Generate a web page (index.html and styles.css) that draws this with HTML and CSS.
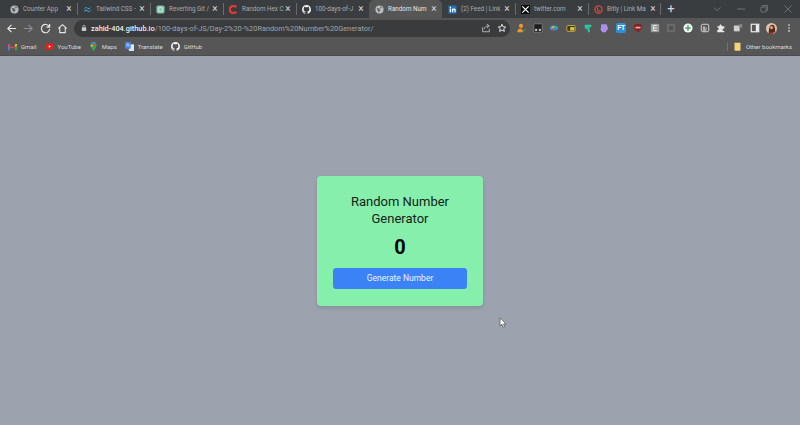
FILE: index.html
```html
<!DOCTYPE html>
<html lang="en">
<head>
<meta charset="utf-8">
<title>Random Number Generator</title>
<link rel="stylesheet" href="styles.css">
</head>
<body>
<header class="chrome">
  <div class="tabstrip">
    <div class="tab"><svg class="fav" viewBox="0 0 10 10"><circle cx="5" cy="5" r="4.5" fill="#b4b7bb"/><path d="M2 3l3 1 1 2-2 2-1-2zM6 1l2 2-2 1z" fill="#55585c"/></svg><span class="tab-title">Counter App</span><span class="x">×</span></div>
    <div class="tab sep"><svg class="fav" viewBox="0 0 10 10"><path d="M1 5c1-3 3-3 4-2s2 1 4-1c-1 3-3 3-4 2s-2-1-4 1zM1 8c1-3 3-3 4-2s2 1 4-1c-1 3-3 3-4 2s-2-1-4 1z" fill="#38bdf8"/></svg><span class="tab-title">Tailwind CSS -</span><span class="x">×</span></div>
    <div class="tab sep"><svg class="fav" viewBox="0 0 10 10"><rect x=".5" y=".5" width="9" height="9" rx="2" fill="#7fc8a9"/><circle cx="5" cy="5" r="2.4" fill="none" stroke="#dff3ea"/></svg><span class="tab-title">Reverting Git /</span><span class="x">×</span></div>
    <div class="tab sep"><svg class="fav" viewBox="0 0 10 10"><path d="M8 2.500A4 4 0 1 0 8 7.500" fill="none" stroke="#e53935" stroke-width="2.400"/></svg><span class="tab-title">Random Hex C</span><span class="x">×</span></div>
    <div class="tab sep"><svg class="fav" viewBox="0 0 16 16"><path fill="#f2f2f2" d="M8 0C3.580 0 0 3.580 0 8c0 3.540 2.290 6.530 5.470 7.590.4.070.55-.17.55-.38v-1.340c-2.230.49-2.690-1.070-2.690-1.070-.36-.92-.89-1.170-.89-1.170-.73-.5.050-.49.050-.49.800.06 1.230.83 1.230.83.710 1.220 1.870.87 2.330.66.070-.52.280-.87.510-1.070-1.780-.2-3.640-.89-3.640-3.950 0-.87.310-1.590.82-2.150-.08-.2-.36-1.020.08-2.120 0 0 .67-.21 2.200.82A7.600 7.600 0 0 1 8 3.900c.68 0 1.360.09 2 .27 1.530-1.040 2.200-.82 2.200-.82.44 1.100.16 1.920.08 2.120.51.560.82 1.270.82 2.150 0 3.070-1.870 3.750-3.650 3.950.29.250.54.730.54 1.480v2.200c0 .21.150.46.55.38A8 8 0 0 0 16 8c0-4.420-3.580-8-8-8z"/></svg><span class="tab-title">100-days-of-J</span><span class="x">×</span></div>
    <div class="tab active"><svg class="fav" viewBox="0 0 10 10"><circle cx="5" cy="5" r="4.5" fill="#b9bcc0"/><path d="M2 3l3 1 1 2-2 2-1-2zM6 1l2 2-2 1z" fill="#63666a"/></svg><span class="tab-title">Random Num</span><span class="x">×</span></div>
    <div class="tab"><svg class="fav" viewBox="0 0 10 10"><rect x=".5" y=".5" width="9" height="9" rx="1" fill="#1d75c9"/><rect x="2" y="4" width="1.400" height="4" fill="#fff"/><rect x="2" y="2" width="1.400" height="1.300" fill="#fff"/><path d="M4.500 4h1.300v.7c.8-1.200 2.700-.8 2.700 1V8H7.200V6c0-1-1.400-1-1.400 0v2H4.500z" fill="#fff"/></svg><span class="tab-title">(2) Feed | Link</span><span class="x">×</span></div>
    <div class="tab sep"><svg class="fav" viewBox="0 0 10 10"><rect width="10" height="10" fill="#0c0c0c"/><path d="M1.500 1.500l7 7M8.500 1.500l-7 7" stroke="#fff" stroke-width="1.300"/></svg><span class="tab-title">twitter.com</span><span class="x">×</span></div>
    <div class="tab sep last"><svg class="fav" viewBox="0 0 10 10"><circle cx="5" cy="5" r="4" fill="none" stroke="#e5443c" stroke-width="1.400"/><path d="M3.500 2.500l1 4.500 2.500-1" fill="none" stroke="#e5443c" stroke-width="1.200"/></svg><span class="tab-title">Bitly | Link Ma</span><span class="x">×</span></div>
    <div class="newtab">+</div>
    <div class="winctl">
      <svg class="ctl" viewBox="0 0 10 10"><path d="M1.500 3.500L5 6.500l3.500-3" fill="none" stroke="#6d7074"/></svg>
      <svg class="ctl" viewBox="0 0 10 10"><path d="M1 5h8" stroke="#6d7074"/></svg>
      <svg class="ctl" viewBox="0 0 10 10"><path d="M2 3h5v5H2zM3.500 3V1.500h5v5H7" fill="none" stroke="#6d7074"/></svg>
      <svg class="ctl" viewBox="0 0 10 10"><path d="M1.500 1.500l7 7M8.500 1.500l-7 7" stroke="#6d7074"/></svg>
    </div>
  </div>
  <div class="toolbar">
    <svg class="nav" viewBox="0 0 12 12"><path d="M11 6H2M6 2L2 6l4 4" fill="none" stroke="#e4e5e6" stroke-width="1.300"/></svg>
    <svg class="nav" viewBox="0 0 12 12"><path d="M1 6h9M6 2l4 4-4 4" fill="none" stroke="#8b8d90" stroke-width="1.300"/></svg>
    <svg class="nav" viewBox="0 0 12 12"><path d="M10 4a4.500 4.500 0 1 0 .5 2.500M10.500 1v3.500H7" fill="none" stroke="#e4e5e6" stroke-width="1.300"/></svg>
    <svg class="nav" viewBox="0 0 12 12"><path d="M1.500 6L6 1.800 10.500 6M3 5v5.500h6V5" fill="none" stroke="#e4e5e6" stroke-width="1.200"/></svg>
    <div class="omnibox">
      <svg class="lock" viewBox="0 0 8 10"><rect x="1" y="4" width="6" height="5" rx="1" fill="#c9cacb"/><path d="M2.500 4V2.800a1.500 1.500 0 0 1 3 0V4" fill="none" stroke="#c9cacb"/></svg>
      <span class="url"><b class="host">zahid-404.github.io</b>/100-days-of-JS/Day-2%20-%20Random%20Number%20Generator/</span>
      <svg class="omni-ic" viewBox="0 0 12 12"><path d="M2 5v5.500h8V7M4 7c.5-2.500 2.500-3.500 4.500-3.500M7 1.500l3 2-3 2.500" fill="none" stroke="#c9cacb"/></svg>
      <svg class="omni-ic" viewBox="0 0 12 12"><path d="M6 1.500l1.300 3 3.200.3-2.400 2.100.7 3.200L6 8.400l-2.800 1.700.7-3.200-2.400-2.100 3.200-.3z" fill="none" stroke="#e4e5e6" stroke-width="1.200"/></svg>
    </div>
    <div class="exts">
      <svg class="ext" viewBox="0 0 12 12"><circle cx="6" cy="3.500" r="2.500" fill="#f0932b"/><path d="M1.500 11c0-6 7-6 7 0z" fill="#f0932b"/><path d="M7 9l1.500 1.500L11 7.500" stroke="#4caf50" fill="none"/></svg>
      <svg class="ext" viewBox="0 0 12 12"><rect x="1" y="1" width="10" height="10" rx="1" fill="#1c1c1c" stroke="#aaa" stroke-width=".6"/><rect x="2.500" y="7" width="2.500" height="2.500" fill="#ccc"/><rect x="7" y="7" width="2.500" height="2.500" fill="#ccc"/></svg>
      <svg class="ext" viewBox="0 0 12 12"><ellipse cx="6" cy="6" rx="5" ry="3" fill="#3a8dde"/><path d="M2 6h4V3z" fill="#f0c02b"/><path d="M6 6h5L8 3z" fill="#4caf50"/><path d="M2 7h5l-2 2z" fill="#e5533c"/></svg>
      <svg class="ext" viewBox="0 0 12 12"><rect x="1" y="3" width="10" height="7" rx="1" fill="#3d3d2a" stroke="#e0b83a"/><rect x="5" y="5" width="5" height="4" fill="#e8c13d"/></svg>
      <svg class="ext" viewBox="0 0 12 12"><path d="M2 2h8v3H7.500l1 6H6L5 6 3.500 8 2 5z" fill="#25c7a6"/></svg>
      <svg class="ext" viewBox="0 0 12 12"><path d="M3 1.500h6l2 5-3 4.500H4L2 8z" fill="#b58be8"/><path d="M3 1.500L2 8l4-2z" fill="#7fa5ee"/></svg>
      <span class="ext ext-ft">FT</span>
      <svg class="ext" viewBox="0 0 12 12"><path d="M1.500 2L6 1l4.500 1v5L6 11 1.500 7z" fill="#8e1c1c"/><rect x="3" y="4.500" width="6" height="2" fill="#e9b0b0"/></svg>
      <svg class="ext" viewBox="0 0 12 12"><rect x="1" y="1" width="10" height="10" fill="#9c9c9c"/><path d="M4 3h4M4 6h4M4 9h4M4 3v6" stroke="#e8e8e8" stroke-width="1.200"/></svg>
      <svg class="ext" viewBox="0 0 12 12"><rect x="1" y="1" width="10" height="10" fill="#6a6a6a"/><rect x="3.500" y="3.500" width="5" height="5" fill="#525252"/></svg>
      <svg class="ext" viewBox="0 0 12 12"><circle cx="6" cy="6" r="5.500" fill="#f2f2f2"/><path d="M6 2.800v6.400M2.800 6h6.400" stroke="#2aa05a" stroke-width="1.500"/></svg>
      <svg class="ext" viewBox="0 0 12 12"><rect x="1.500" y="1.500" width="9" height="9" rx="2" fill="none" stroke="#cfcfcf" stroke-width="1.200"/><path d="M4 10V4.500h1.500V10M7 10V6h1.500" stroke="#cfcfcf" fill="none"/></svg>
      <svg class="ext" viewBox="0 0 12 12"><path d="M1.500 4H4c0-3 3-3 3 0h3v2.500c-3 0-3 3 0 3V11H1.500V8.500c2.500 0 2.500-3 0-3z" fill="#e6e6e6"/></svg>
      <svg class="ext" viewBox="0 0 12 12"><rect x="1" y="3" width="7" height="7" fill="#d0d0d0"/><rect x="7" y="1.500" width="4" height="4" fill="#8a8a8a"/></svg>
      <svg class="ext" viewBox="0 0 12 12"><rect x="1.500" y="1.500" width="9" height="9" fill="none" stroke="#efefef" stroke-width="1.400"/><rect x="7" y="2" width="3" height="8" fill="#efefef"/></svg>
      <svg class="ext avatar" viewBox="0 0 12 12"><circle cx="6" cy="6" r="6" fill="#d8c4b0"/><path d="M3 12c0-7 1-10 4-10s3 5 3 8z" fill="#5a2a18"/><circle cx="6" cy="5" r="1.800" fill="#d99a78"/><path d="M4 12c.5-3 3.500-3 4 0z" fill="#a5392c"/></svg>
      <svg class="ext" viewBox="0 0 12 12"><circle cx="6" cy="2.500" r="1" fill="#e4e5e6"/><circle cx="6" cy="6" r="1" fill="#e4e5e6"/><circle cx="6" cy="9.500" r="1" fill="#e4e5e6"/></svg>
    </div>
  </div>
  <div class="bookmarks">
    <span class="bm"><svg class="bm-ic" viewBox="0 0 12 10"><path d="M0 1.500h2.500V10H1a1 1 0 0 1-1-1z" fill="#4285f4"/><path d="M9.500 1.500H12V9a1 1 0 0 1-1 1H9.500z" fill="#34a853"/><path d="M0 1.500L6 6l6-4.500V4L6 8 0 4z" fill="#ea4335"/><path d="M9.500 1.500H12V4L9.500 5.500z" fill="#fbbc05"/></svg>Gmail</span>
    <span class="bm"><svg class="bm-ic" viewBox="0 0 12 10"><rect y="1" width="12" height="8" rx="2.500" fill="#e62117"/><path d="M5 3.200v3.600L8 5z" fill="#fff"/></svg>YouTube</span>
    <span class="bm"><svg class="bm-ic" viewBox="0 0 10 12"><path d="M5 0a4 4 0 0 1 4 4c0 3-4 8-4 8S1 7 1 4a4 4 0 0 1 4-4z" fill="#34a853"/><path d="M5 0a4 4 0 0 1 3 1.400L5 4 2 1.400A4 4 0 0 1 5 0z" fill="#4285f4"/><path d="M1 4l4 0-3 3z" fill="#fbbc05"/><circle cx="6.500" cy="3.500" r="1.500" fill="#ea4335"/></svg>Maps</span>
    <span class="bm"><svg class="bm-ic" viewBox="0 0 12 12"><rect x="5" y="3" width="7" height="9" rx="1" fill="#dfe6f2"/><rect y="0" width="7.500" height="9" rx="1" fill="#4285f4"/><path d="M2 6l1.700-4L5.500 6" stroke="#fff" fill="none" stroke-width=".8"/></svg>Translate</span>
    <span class="bm"><svg class="bm-ic" viewBox="0 0 16 16"><path fill="#f2f2f2" d="M8 0C3.580 0 0 3.580 0 8c0 3.540 2.290 6.530 5.470 7.590.4.070.55-.17.55-.38v-1.340c-2.230.49-2.690-1.070-2.690-1.070-.36-.92-.89-1.170-.89-1.170-.73-.5.050-.49.050-.49.800.06 1.230.83 1.230.83.710 1.220 1.870.87 2.330.66.070-.52.280-.87.510-1.070-1.780-.2-3.640-.89-3.640-3.950 0-.87.310-1.590.82-2.150-.08-.2-.36-1.020.08-2.120 0 0 .67-.21 2.200.82A7.600 7.600 0 0 1 8 3.900c.68 0 1.360.09 2 .27 1.530-1.040 2.200-.82 2.200-.82.44 1.100.16 1.920.08 2.120.51.560.82 1.270.82 2.150 0 3.070-1.870 3.750-3.650 3.950.29.250.54.730.54 1.480v2.200c0 .21.150.46.55.38A8 8 0 0 0 16 8c0-4.420-3.580-8-8-8z"/></svg>GitHub</span>
    <span class="bm other"><svg class="bm-ic" viewBox="0 0 10 12"><path d="M1 1h8v9.500a1 1 0 0 1-1 1H2a1 1 0 0 1-1-1z" fill="#f4d678"/></svg>Other bookmarks</span>
  </div>
</header>
<main class="stage">
  <section class="card">
    <h1 class="heading">Random Number Generator</h1>
    <div class="value">0</div>
    <button class="generate" type="button">Generate Number</button>
  </section>
  <svg class="cursor" viewBox="0 0 9 13"><path d="M1 1v9.500l2.300-2 1.500 3.500 1.600-.7L5 8.300h3z" fill="#fff" stroke="#222" stroke-width=".6"/></svg>
</main>
</body>
</html>
```
FILE: styles.css
```css
* { box-sizing: border-box; }
html, body { margin: 0; height: 100%; }
body {
  display: flex;
  flex-direction: column;
  height: 425px;
  overflow: hidden;
  font-family: Roboto, "Noto Sans", sans-serif;
  background: #9ca3af;
}
.chrome { flex: none; height: 56px; background: #565656; display: flex; flex-direction: column; border-bottom: 1px solid #4a4b4d; }
.tabstrip { height: 18px; background: #3a3d40; display: flex; align-items: stretch; padding-left: 4px; }
.tab {
  width: 73px; display: flex; align-items: center; padding: 0 4px 0 6px; position: relative;
  font-size: 6.300px; color: #a9abad; white-space: nowrap;
}
.tab.sep::before { content: ""; position: absolute; left: 0; top: 3px; bottom: 3px; width: 1px; background: #6a6c6f; }
.tab.last::after { content: ""; position: absolute; right: 0; top: 3px; bottom: 3px; width: 1px; background: #6a6c6f; }
.tab.active { background: #565656; color: #e4e5e6; border-radius: 5px 5px 0 0; }
.fav { width: 9px; height: 9px; flex: none; margin-right: 4px; }
.tab-title { flex: 1; min-width: 0; }
.x { flex: none; font-size: 10px; line-height: 10px; color: #d6d7d8; width: 8px; text-align: center; }
.newtab { width: 20px; color: #d6d7d8; font-size: 13px; line-height: 17px; text-align: center; }
.winctl { margin-left: auto; display: flex; align-items: center; gap: 13.700px; padding-right: 7px; }
.ctl { width: 10px; height: 10px; }
.toolbar { height: 20px; display: flex; align-items: center; padding-left: 6px; }
.nav { width: 11px; height: 11px; flex: none; margin-right: 6px; }
.omnibox {
  width: 436px; height: 17px; border-radius: 9px; background: #3a3b3d;
  display: flex; align-items: center; padding: 0 3px 0 7px;
}
.lock { width: 6px; height: 8px; flex: none; margin-right: 4px; }
.url { flex: 1; font-size: 7.350px; color: #a3a5a8; white-space: nowrap; overflow: hidden; }
.host { font-weight: 500; color: #eeeeee; }
.omni-ic { width: 10px; height: 10px; flex: none; margin-left: 6px; }
.exts { flex: 1; display: flex; align-items: center; gap: 6.700px; padding-left: 6px; }
.ext { width: 10px; height: 10px; flex: none; }
.ext-ft { background: #2d8fe0; color: #fff; font-size: 6.500px; font-weight: 700; line-height: 10px; text-align: center; border-radius: 2px; font-family: "Liberation Sans", sans-serif; }
.avatar { width: 11px; height: 11px; }
.bookmarks { height: 17px; display: flex; align-items: center; padding: 0 8px; gap: 8px; font-size: 6px; color: #dadbdc; }
.bm { display: flex; align-items: center; gap: 4px; white-space: nowrap; }
.bm-ic { width: 9px; height: 9px; flex: none; }
.other { margin-left: auto; padding-left: 5px; border-left: 1px solid #6f7072; }
.stage { flex: 1; position: relative; display: flex; align-items: center; justify-content: center; padding-bottom: 1px; }
.card {
  width: 166px; height: 130px; margin-top: 1px; background: #86efac; border-radius: 4px;
  padding: 17px 16px 16px; display: flex; flex-direction: column; align-items: stretch;
  box-shadow: 0 2px 4px rgba(0,0,0,.12);
}
.heading { margin: 0; font-size: 13px; font-weight: 400; line-height: 17px; text-align: center; color: #14231a; }
.value { margin-top: 7px; font-size: 20px; line-height: 26px; font-weight: 700; text-align: center; color: #050505; }
.generate {
  margin-top: 8px; height: 21px; border: 0; border-radius: 3px; background: #3b82f6; color: #eef4ff;
  font: inherit; font-size: 8.500px;
}
.cursor { position: absolute; left: 499px; top: 261px; width: 8px; height: 11px; }
```
